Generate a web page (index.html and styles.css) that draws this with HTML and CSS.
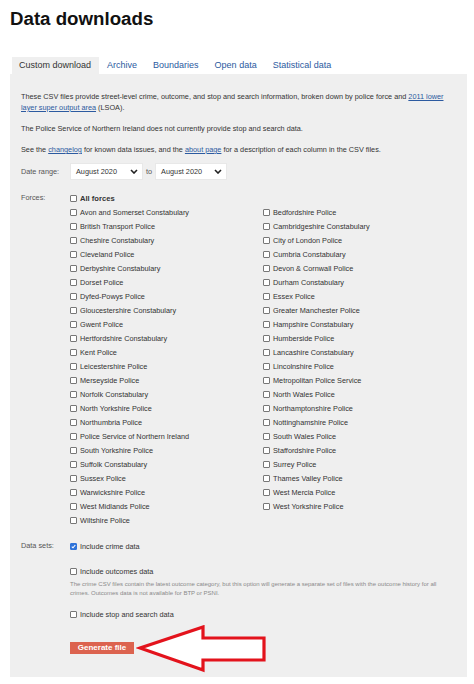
FILE: index.html
```html
<!DOCTYPE html>
<html>
<head>
<meta charset="utf-8">
<link rel="stylesheet" href="styles.css">
</head>
<body>
<h1 class="title">Data downloads</h1>
<ul class="tabs">
  <li class="tab active">Custom download</li>
  <li class="tab"><a href="#">Archive</a></li>
  <li class="tab"><a href="#">Boundaries</a></li>
  <li class="tab"><a href="#">Open data</a></li>
  <li class="tab"><a href="#">Statistical data</a></li>
</ul>
<div class="panel">
  <p class="para">These CSV files provide street-level crime, outcome, and stop and search information, broken down by police force and <a href="#">2011 lower</a><br><a href="#">layer super output area</a> (LSOA).</p>
  <p class="para">The Police Service of Northern Ireland does not currently provide stop and search data.</p>
  <p class="para last">See the <a href="#">changelog</a> for known data issues, and the <a href="#">about page</a> for a description of each column in the CSV files.</p>

  <div class="row date-row">
    <div class="label">Date range:</div>
    <div class="field dates">
      <div class="select s1"><span>August 2020</span><svg class="chev" width="8" height="5" viewBox="0 0 8 5"><polyline points="1,1 4,4 7,1" fill="none" stroke="#222" stroke-width="1.6"/></svg></div>
      <span class="to">to</span>
      <div class="select s2"><span>August 2020</span><svg class="chev" width="8" height="5" viewBox="0 0 8 5"><polyline points="1,1 4,4 7,1" fill="none" stroke="#222" stroke-width="1.6"/></svg></div>
    </div>
  </div>

  <div class="row forces-row">
    <div class="label">Forces:</div>
    <div class="field">
      <div class="check all"><span class="box"></span>All forces</div>
      <div class="force-grid">
        <div class="check"><span class="box"></span>Avon and Somerset Constabulary</div>
        <div class="check"><span class="box"></span>Bedfordshire Police</div>
        <div class="check"><span class="box"></span>British Transport Police</div>
        <div class="check"><span class="box"></span>Cambridgeshire Constabulary</div>
        <div class="check"><span class="box"></span>Cheshire Constabulary</div>
        <div class="check"><span class="box"></span>City of London Police</div>
        <div class="check"><span class="box"></span>Cleveland Police</div>
        <div class="check"><span class="box"></span>Cumbria Constabulary</div>
        <div class="check"><span class="box"></span>Derbyshire Constabulary</div>
        <div class="check"><span class="box"></span>Devon &amp; Cornwall Police</div>
        <div class="check"><span class="box"></span>Dorset Police</div>
        <div class="check"><span class="box"></span>Durham Constabulary</div>
        <div class="check"><span class="box"></span>Dyfed-Powys Police</div>
        <div class="check"><span class="box"></span>Essex Police</div>
        <div class="check"><span class="box"></span>Gloucestershire Constabulary</div>
        <div class="check"><span class="box"></span>Greater Manchester Police</div>
        <div class="check"><span class="box"></span>Gwent Police</div>
        <div class="check"><span class="box"></span>Hampshire Constabulary</div>
        <div class="check"><span class="box"></span>Hertfordshire Constabulary</div>
        <div class="check"><span class="box"></span>Humberside Police</div>
        <div class="check"><span class="box"></span>Kent Police</div>
        <div class="check"><span class="box"></span>Lancashire Constabulary</div>
        <div class="check"><span class="box"></span>Leicestershire Police</div>
        <div class="check"><span class="box"></span>Lincolnshire Police</div>
        <div class="check"><span class="box"></span>Merseyside Police</div>
        <div class="check"><span class="box"></span>Metropolitan Police Service</div>
        <div class="check"><span class="box"></span>Norfolk Constabulary</div>
        <div class="check"><span class="box"></span>North Wales Police</div>
        <div class="check"><span class="box"></span>North Yorkshire Police</div>
        <div class="check"><span class="box"></span>Northamptonshire Police</div>
        <div class="check"><span class="box"></span>Northumbria Police</div>
        <div class="check"><span class="box"></span>Nottinghamshire Police</div>
        <div class="check"><span class="box"></span>Police Service of Northern Ireland</div>
        <div class="check"><span class="box"></span>South Wales Police</div>
        <div class="check"><span class="box"></span>South Yorkshire Police</div>
        <div class="check"><span class="box"></span>Staffordshire Police</div>
        <div class="check"><span class="box"></span>Suffolk Constabulary</div>
        <div class="check"><span class="box"></span>Surrey Police</div>
        <div class="check"><span class="box"></span>Sussex Police</div>
        <div class="check"><span class="box"></span>Thames Valley Police</div>
        <div class="check"><span class="box"></span>Warwickshire Police</div>
        <div class="check"><span class="box"></span>West Mercia Police</div>
        <div class="check"><span class="box"></span>West Midlands Police</div>
        <div class="check"><span class="box"></span>West Yorkshire Police</div>
        <div class="check"><span class="box"></span>Wiltshire Police</div>
      </div>
    </div>
  </div>

  <div class="row sets-row">
    <div class="label">Data sets:</div>
    <div class="field">
      <div class="check"><span class="box checked"><svg width="5" height="5" viewBox="0 0 5 5"><polyline points="0.8,2.6 2,3.8 4.3,1" fill="none" stroke="#fff" stroke-width="1.1"/></svg></span>Include crime data</div>
      <div class="check spaced"><span class="box"></span>Include outcomes data</div>
      <p class="hint">The crime CSV files contain the latest outcome category, but this option will generate a separate set of files with the outcome history for all crimes. Outcomes data is not available for BTP or PSNI.</p>
      <div class="check spaced2"><span class="box"></span>Include stop and search data</div>
      <div class="submit-row">
        <button class="btn">Generate file</button>
        <svg class="arrow" width="134" height="50" viewBox="0 0 134 50"><polygon points="4,23 67,2 67,13 128,13 128,35 67,35 67,45" fill="#fff" stroke="#e3131c" stroke-width="3.2" stroke-linejoin="miter"/></svg>
      </div>
    </div>
  </div>
</div>
</body>
</html>
```
FILE: styles.css
```css
* { box-sizing: border-box; }
body {
  margin: 8px 7px 0 10px;
  background: #fff;
  font-family: "Liberation Sans", Arial, sans-serif;
  color: #333;
}
.title {
  margin: 0;
  font-size: 18.7px;
  line-height: 22px;
  font-weight: bold;
  color: #111;
}
.tabs {
  list-style: none;
  margin: 27px 0 0 2px;
  padding: 0;
  display: flex;
}
.tab {
  font-size: 9px;
  line-height: 17px;
  height: 17px;
  padding: 0 8px 0 7px;
}
.tab a { color: #2c5aa0; text-decoration: none; }
.tab + .tab { padding: 0 8px 0 8px; }
.tab.active { background: #efefef; color: #333; }
.panel {
  background: #efefef;
  padding: 17px 11px 23px 11px;
  font-size: 7.3px;
  line-height: 11px;
}
.para { margin: 0 0 10px; }
.para.last { margin-bottom: 8px; }
.para a { color: #2c5aa0; text-decoration: underline; }
.row { display: flex; }
.label { width: 49px; flex: none; color: #555; }
.field { flex: 1; }
.date-row .label { line-height: 17px; }
.dates { display: flex; align-items: center; }
.select {
  background: #fff;
  height: 17px;
  border: 1px solid #e8e8e8;
  display: flex;
  align-items: center;
  justify-content: space-between;
  padding: 0 4px 0 5px;
  color: #333;
}
.s1 { width: 73px; }
.s2 { width: 72px; }
.chev { display: block; }
.to { margin: 0 3px; color: #555; }
.forces-row { margin-top: 11px; }
.forces-row .label, .sets-row .label { line-height: 14px; }
.check {
  display: flex;
  align-items: center;
  height: 14px;
  white-space: nowrap;
}
.check.all { font-weight: bold; font-size: 7.6px; }
.box {
  width: 7px;
  height: 7px;
  border: 1px solid #777;
  border-radius: 1px;
  background: #fff;
  margin-right: 3px;
  flex: none;
  display: flex;
  align-items: center;
  justify-content: center;
}
.box.checked { background: #2f73d9; border-color: #2f73d9; }
.box.checked svg { display: block; }
.force-grid {
  display: grid;
  grid-template-columns: 193px 1fr;
}
.sets-row { margin-top: 12px; }
.spaced { margin-top: 11px; }
.hint {
  margin: 2px 0 0;
  font-size: 6px;
  line-height: 8.5px;
  color: #8a8a8a;
}
.spaced2 { margin-top: 10px; }
.submit-row {
  position: relative;
  margin-top: 21px;
  height: 12px;
}
.btn {
  display: block;
  height: 12px;
  width: 64px;
  padding: 0;
  border: 0;
  background: #dc634f;
  color: #fff;
  font-family: "Liberation Sans", Arial, sans-serif;
  font-size: 8px;
  font-weight: bold;
  line-height: 12px;
}
.arrow {
  position: absolute;
  left: 66px;
  top: -17px;
}
```
